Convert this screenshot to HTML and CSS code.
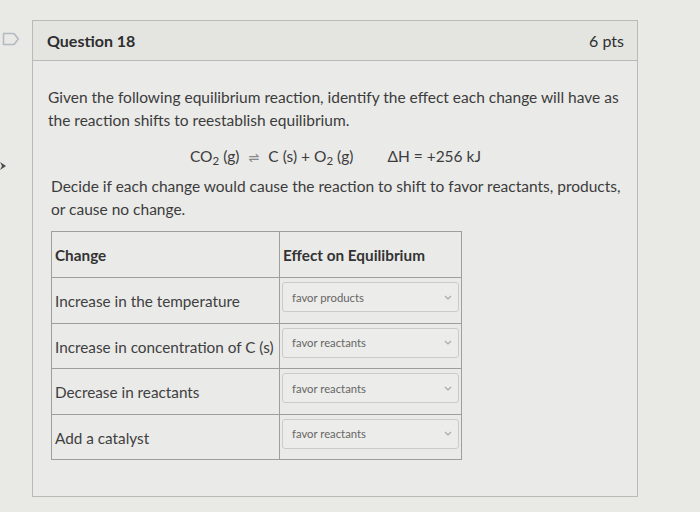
FILE: index.html
```html
<!DOCTYPE html>
<html>
<head>
<meta charset="utf-8">
<link rel="stylesheet" href="styles.css">
</head>
<body>
<div class="page">
  <svg class="flag" width="18" height="15" viewBox="0 0 18 15"><path d="M1.5 1.5 H11 Q12 1.5 12.8 2.4 L16.3 7 L12.8 11.6 Q12 12.5 11 12.5 H1.5 Z" fill="none" stroke="#b3bac2" stroke-width="1.6" stroke-linejoin="round"/></svg>
  <svg class="cursor" width="8" height="10" viewBox="0 0 8 10"><path d="M0 1 L6 5 L0 9 L2 5 Z" fill="#4a4a4a"/></svg>
  <div class="card">
    <div class="card-head">
      <span class="q-title">Question 18</span>
      <span class="q-pts">6 pts</span>
    </div>
    <div class="card-body">
      <p class="intro">Given the following equilibrium reaction, identify the effect each change will have as the reaction shifts to reestablish equilibrium.</p>
      <p class="eq"><span>CO<sub>2</sub> (g) <span class="arrow">⇌</span> C (s) + O<sub>2</sub> (g)</span><span class="dh">ΔH = +256 kJ</span></p>
      <p class="decide">Decide if each change would cause the reaction to shift to favor reactants, products, or cause no change.</p>
      <table class="grid">
        <tr><th class="c1">Change</th><th class="c2">Effect on Equilibrium</th></tr>
        <tr><td class="c1">Increase in the temperature</td><td class="c2"><div class="sel"><span>favor products</span><svg width="8" height="5" viewBox="0 0 8 5"><path d="M1 1 L4 4 L7 1" fill="none" stroke="#a9a9a9" stroke-width="1.2"/></svg></div></td></tr>
        <tr><td class="c1">Increase in concentration of C (s)</td><td class="c2"><div class="sel"><span>favor reactants</span><svg width="8" height="5" viewBox="0 0 8 5"><path d="M1 1 L4 4 L7 1" fill="none" stroke="#a9a9a9" stroke-width="1.2"/></svg></div></td></tr>
        <tr><td class="c1">Decrease in reactants</td><td class="c2"><div class="sel"><span>favor reactants</span><svg width="8" height="5" viewBox="0 0 8 5"><path d="M1 1 L4 4 L7 1" fill="none" stroke="#a9a9a9" stroke-width="1.2"/></svg></div></td></tr>
        <tr><td class="c1">Add a catalyst</td><td class="c2"><div class="sel"><span>favor reactants</span><svg width="8" height="5" viewBox="0 0 8 5"><path d="M1 1 L4 4 L7 1" fill="none" stroke="#a9a9a9" stroke-width="1.2"/></svg></div></td></tr>
      </table>
    </div>
  </div>
</div>
</body>
</html>
```
FILE: styles.css
```css
html, body {
  margin: 0;
  padding: 0;
  background: #e9e9e6;
}
body {
  font-family: Lato, "Open Sans", sans-serif;
  color: #3c3c3c;
  width: 700px;
  height: 512px;
  overflow: hidden;
}
.page {
  position: relative;
  padding: 20px 0 0 32px;
}
.flag {
  position: absolute;
  left: 2px;
  top: 32px;
}
.cursor {
  position: absolute;
  left: 0;
  top: 161px;
}
.card {
  width: 606px;
  height: 477px;
  border: 1px solid #b9b9b7;
  background: #eaeae8;
  box-sizing: border-box;
}
.card-head {
  height: 40px;
  box-sizing: border-box;
  border-bottom: 1px solid #b9b9b7;
  background: #e4e4e1;
  display: flex;
  align-items: center;
  justify-content: space-between;
  padding: 0 13px 0 14px;
  font-size: 16px;
  color: #2e2e2e;
}
.q-title {
  font-weight: 700;
}
.card-body {
  padding: 25px 8px 0 15px;
}
p {
  margin: 0;
  font-size: 15.5px;
  line-height: 23px;
}
.eq {
  margin-top: 13px;
  display: flex;
  justify-content: center;
  gap: 34px;
  font-size: 15.5px;
  padding-left: 2px;
  padding-right: 8px;
}
.eq sub {
  font-size: 11.5px;
  vertical-align: -3px;
  line-height: 0;
}
.arrow {
  font-family: "DejaVu Sans", sans-serif;
  color: #888;
  font-size: 13px;
  padding: 0 5px;
}
.decide {
  margin-top: 6px;
  padding-left: 3px;
}
.grid {
  margin-top: 10px;
  margin-left: 3px;
  border-collapse: collapse;
  width: 411px;
  font-size: 15.3px;
  color: #404040;
}
.grid th, .grid td {
  border: 1px solid #9e9e9c;
  padding: 0 3px;
  height: 45.5px;
  box-sizing: border-box;
  text-align: left;
}
.grid th {
  height: 46px;
  font-weight: 700;
  color: #333;
}
.grid .c1 {
  width: 228px;
}
.grid td.c1 {
  padding-top: 2px;
}
.grid td.c2 {
  padding: 0 2px;
  vertical-align: middle;
}
.sel {
  height: 30px;
  box-sizing: border-box;
  border: 1px solid #cbcbc9;
  border-radius: 3px;
  background: #ececea;
  display: flex;
  align-items: center;
  justify-content: space-between;
  padding: 0 6px 0 9px;
  font-size: 11.3px;
  color: #666;
  margin-top: -6px;
}
```
